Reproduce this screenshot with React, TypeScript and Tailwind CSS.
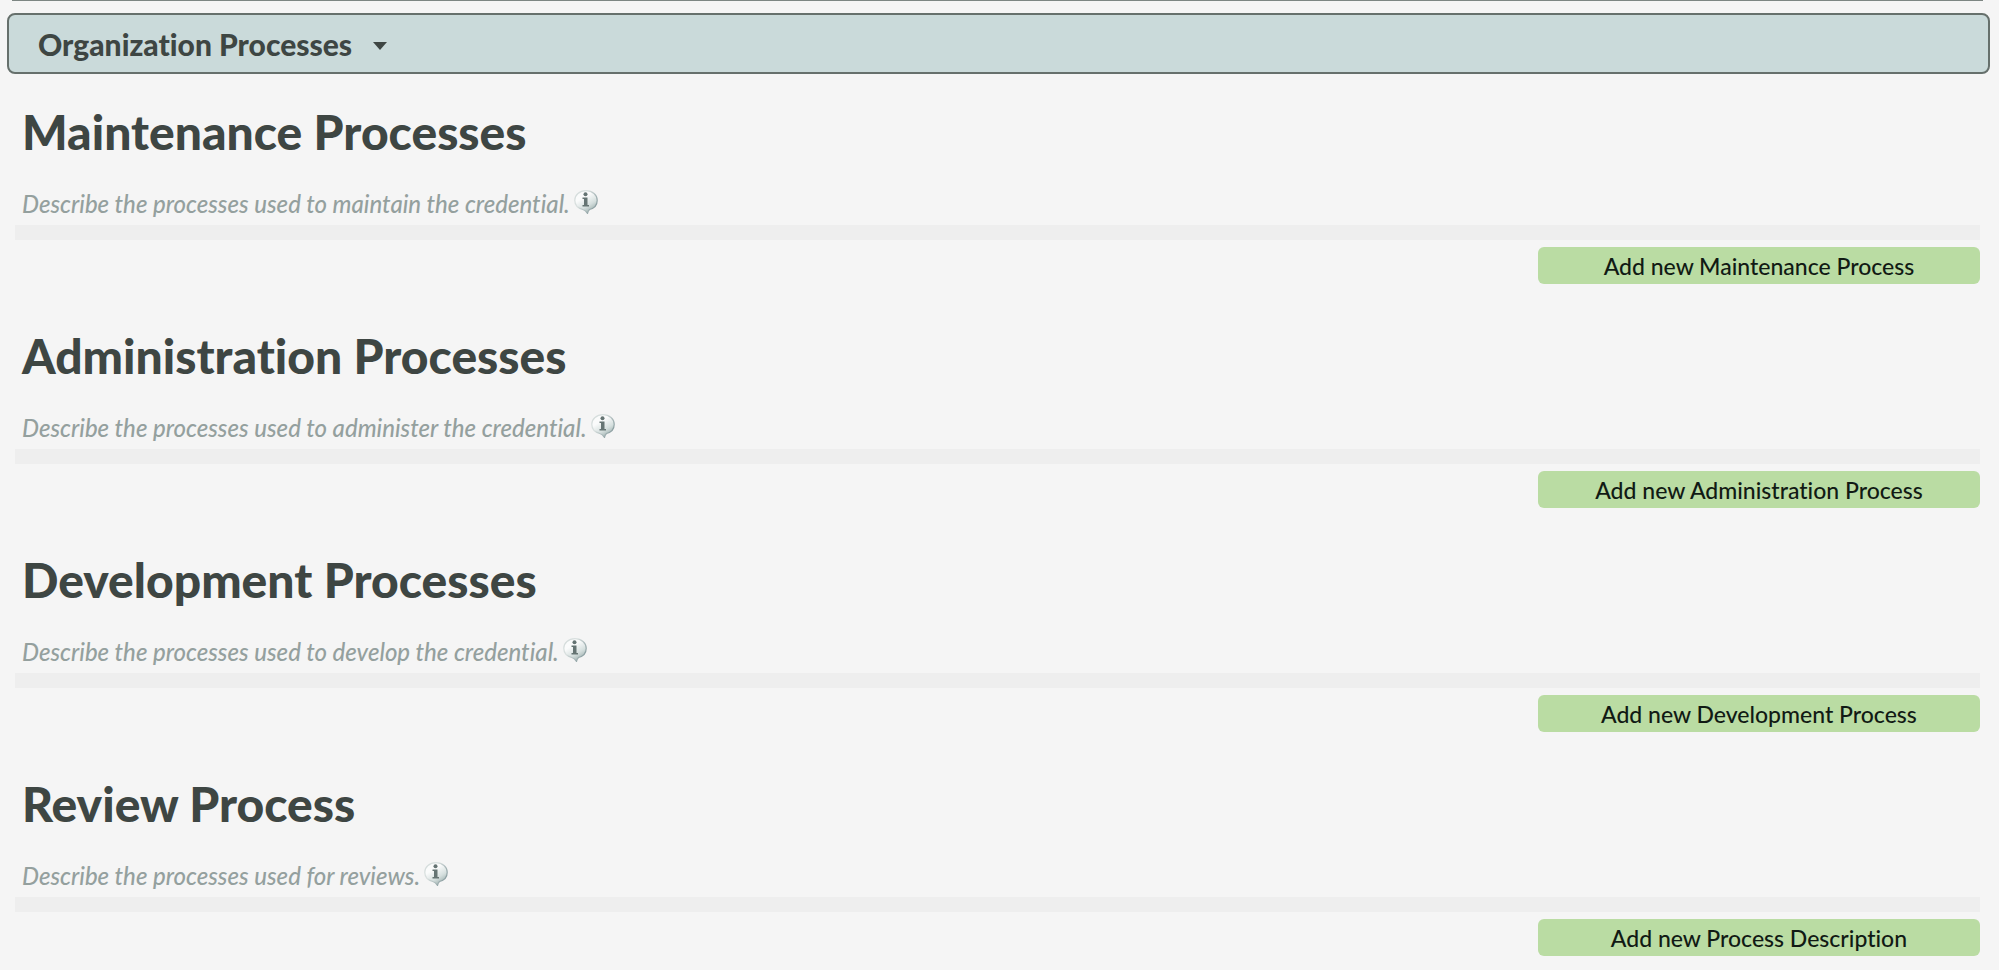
import { useState } from "react";

interface ProcessSection {
    title: string;
    description: string;
    action: string;
}

const sections: ProcessSection[] = [
    {
        title: "Maintenance Processes",
        description: "Describe the processes used to maintain the credential.",
        action: "Add new Maintenance Process",
    },
    {
        title: "Administration Processes",
        description: "Describe the processes used to administer the credential.",
        action: "Add new Administration Process",
    },
    {
        title: "Development Processes",
        description: "Describe the processes used to develop the credential.",
        action: "Add new Development Process",
    },
    {
        title: "Review Process",
        description: "Describe the processes used for reviews.",
        action: "Add new Process Description",
    },
];

function InfoIcon() {
    return (
        <svg width="24" height="24" viewBox="0 0 24 24" aria-hidden="true">
            <defs>
                <linearGradient id="bubble" x1="0.2" y1="0" x2="0.8" y2="1">
                    <stop offset="0.3" stopColor="#fafbfb" />
                    <stop offset="0.65" stopColor="#d5dfde" />
                    <stop offset="1" stopColor="#8fa3a1" />
                </linearGradient>
                <linearGradient id="rim" x1="0" y1="0" x2="1" y2="0.7">
                    <stop offset="0" stopColor="#d3dbda" />
                    <stop offset="0.4" stopColor="#d9e0df" />
                    <stop offset="1" stopColor="#82979a" />
                </linearGradient>
            </defs>
            <path
                d="M12 .7C5.500.7.8 4.900.8 10.300c0 4.500 3.200 8 8 9.200 2 .6 3.400 1.900 4.700 3.900.3-1.700.8-2.900 2-3.900 4.700-1.200 7.700-4.700 7.700-9.200C23.200 4.900 18.500.7 12 .7Z"
                fill="url(#bubble)"
                stroke="url(#rim)"
                strokeWidth="1.200"
            />
            <circle cx="11.500" cy="4.200" r="2" fill="#657473" />
            <path d="M8.500 7.500h5v7.500H15v1.500H8.500V15H10V9H8.500Z" fill="#657473" />
        </svg>
    );
}

function Section({ title, description, action }: ProcessSection) {
    return (
        <section className="flex h-56 flex-col">
            <h2 className="px-[7px] pt-7 text-[48px] leading-[60px] font-black">{title}</h2>
            <div className="flex items-center gap-1 px-[7px] pt-[26px]">
                <p className="text-[24px] leading-8 font-medium text-[#94a09e] italic">{description}</p>
                <button type="button" aria-label={`About ${title}`} className="pb-1">
                    <InfoIcon />
                </button>
            </div>
            <div className="mt-[5px] h-[15px] shrink-0 bg-[#eeeeee]" />
            <button
                type="button"
                className="mt-[7px] h-[37px] w-[22.5%] shrink-0 self-end rounded-md bg-[#badca3] text-[23px] leading-7 font-medium whitespace-nowrap text-[#111a14]"
            >
                {action}
            </button>
        </section>
    );
}

export default function App() {
    const [open, setOpen] = useState(true);

    return (
        <main className="min-h-screen bg-[#f5f5f5] font-['Lato',sans-serif] text-[#3e4643] [font-variant-ligatures:none]">
            {/* bottom edge of the panel above */}
            <div className="mr-4 ml-3 h-px bg-[#7d8683]" />
            <div className="pt-3 pr-[9px] pl-[7px]">
                <button
                    type="button"
                    aria-expanded={open}
                    onClick={() => setOpen(!open)}
                    className="flex h-[61px] w-full items-center gap-5 rounded-lg border-2 border-[#66706c] bg-[#cadada] px-[29px] text-left text-[30px] leading-9 font-black"
                >
                    Organization Processes
                    <svg width="16" height="14" viewBox="0 0 16 14" aria-hidden="true">
                        <path d="M1 5h14L8 13Z" fill="#3e4643" />
                    </svg>
                </button>
            </div>
            {open && (
                <div className="pr-[19px] pl-[15px]">
                    {sections.map((section) => (
                        <Section key={section.title} {...section} />
                    ))}
                </div>
            )}
        </main>
    );
}
